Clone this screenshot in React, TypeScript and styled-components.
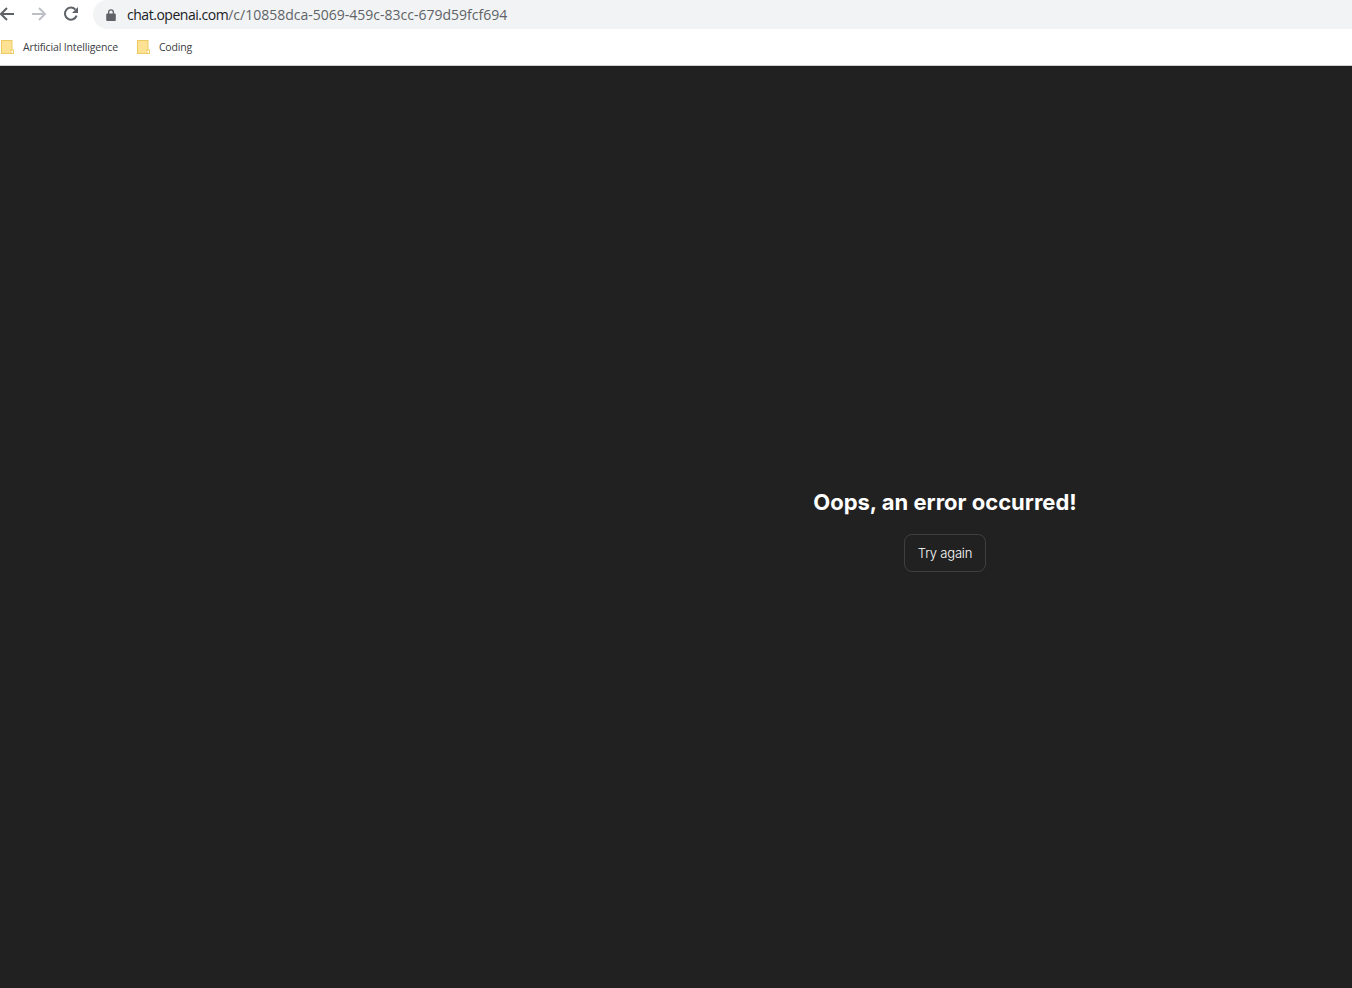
import styled, { createGlobalStyle } from "styled-components";

const GlobalStyle = createGlobalStyle`
  html, body {
    margin: 0;
    padding: 0;
    height: 100%;
    overflow: hidden;
  }
  #root {
    height: 100%;
  }
`;

const folders = ["Artificial Intelligence", "Coding"];

const BackIcon = ({ color }: { color: string }) => (
  <svg width="16" height="16" viewBox="0 0 16 16" fill="none">
    <path d="M15 8H2M8 2 2 8l6 6" stroke={color} strokeWidth="2" />
  </svg>
);

const ForwardIcon = ({ color }: { color: string }) => (
  <svg width="16" height="16" viewBox="0 0 16 16" fill="none">
    <path d="M1 8h13M8 2l6 6-6 6" stroke={color} strokeWidth="2" />
  </svg>
);

const ReloadIcon = () => (
  <svg width="16" height="16" viewBox="0 0 16 16" fill="none">
    <path d="M13.6 9.6A6 6 0 1 1 12.4 3.6" stroke="#5f6368" strokeWidth="2" />
    <path d="M15 1v6H9z" fill="#5f6368" />
  </svg>
);

const LockIcon = () => (
  <svg width="10" height="12" viewBox="0 0 10 12">
    <path
      d="M2 4.5V3.2a3 3 0 0 1 6 0v1.3h.8a1 1 0 0 1 1 1V11a1 1 0 0 1-1 1H1.200a1 1 0 0 1-1-1V5.500a1 1 0 0 1 1-1zm1.300 0h3.400V3.200a1.700 1.700 0 0 0-3.400 0z"
      fill="#5f6368"
    />
  </svg>
);

const FolderIcon = () => (
  <svg width="13" height="14" viewBox="0 0 13 14">
    <rect x="0.5" y="0.5" width="10.500" height="13" fill="#fde293" stroke="#eecb62" />
    <rect x="10" y="10" width="2.500" height="3.500" fill="#fff" stroke="#eecb62" />
  </svg>
);

export default function App() {
  return (
    <Page>
      <GlobalStyle />
      <Toolbar>
        <NavButtons>
          <BackIcon color="#5f6368" />
          <ForwardIcon color="#bdc1c6" />
          <ReloadIcon />
        </NavButtons>
        <Omnibox>
          <LockIcon />
          <UrlText>
            <Host>chat.openai.com</Host>/c/10858dca-5069-459c-83cc-679d59fcf694
          </UrlText>
        </Omnibox>
      </Toolbar>
      <Bookmarks>
        {folders.map((name) => (
          <Bookmark key={name}>
            <FolderIcon />
            <BookmarkLabel>{name}</BookmarkLabel>
          </Bookmark>
        ))}
      </Bookmarks>
      <Content>
        <ErrorBox>
          <Heading>Oops, an error occurred!</Heading>
          <RetryButton>Try again</RetryButton>
        </ErrorBox>
      </Content>
    </Page>
  );
}

const Page = styled.div`
  height: 100%;
  display: flex;
  flex-direction: column;
  background: #212121;
`;

const Toolbar = styled.div`
  height: 29px;
  display: flex;
  background: #fff;
`;

const NavButtons = styled.div`
  width: 93px;
  height: 28px;
  display: flex;
  align-items: center;
  gap: 16px;
  svg:first-child {
    margin-left: -1px;
  }
`;

const Omnibox = styled.div`
  flex: 1;
  height: 29px;
  display: flex;
  align-items: center;
  gap: 11px;
  padding-left: 13px;
  background: #f1f3f4;
  border-radius: 15px 0 0 15px;
`;

const UrlText = styled.div`
  font-family: "Open Sans", sans-serif;
  font-size: 14px;
  color: #5f6368;
`;

const Host = styled.span`
  color: #202124;
  letter-spacing: -0.47px;
`;

const Bookmarks = styled.div`
  height: 36px;
  display: flex;
  align-items: center;
  gap: 19px;
  padding-left: 1px;
  background: #fff;
  border-bottom: 1px solid #d0d0d0;
  box-sizing: content-box;
`;

const Bookmark = styled.div`
  display: flex;
  align-items: center;
  gap: 9px;
`;

const BookmarkLabel = styled.span`
  font-family: "Open Sans", sans-serif;
  font-size: 10.5px;
  letter-spacing: -0.15px;
  color: #3c4043;
`;

const Content = styled.main`
  flex: 1;
  display: flex;
  padding-left: 538px;
`;

const ErrorBox = styled.div`
  flex: 1;
  display: flex;
  flex-direction: column;
  align-items: center;
  padding-top: 420px;
`;

const Heading = styled.h1`
  margin: 0;
  font-family: Inter, sans-serif;
  font-size: 22px;
  line-height: 32px;
  font-weight: 700;
  color: #fff;
`;

const RetryButton = styled.button`
  margin-top: 16px;
  width: 82px;
  height: 38px;
  padding: 0;
  border: 1px solid #3f3f3f;
  border-radius: 8px;
  background: transparent;
  font-family: Inter, sans-serif;
  font-size: 13px;
  letter-spacing: -0.2px;
  font-weight: 300;
  color: #fff;
`;
